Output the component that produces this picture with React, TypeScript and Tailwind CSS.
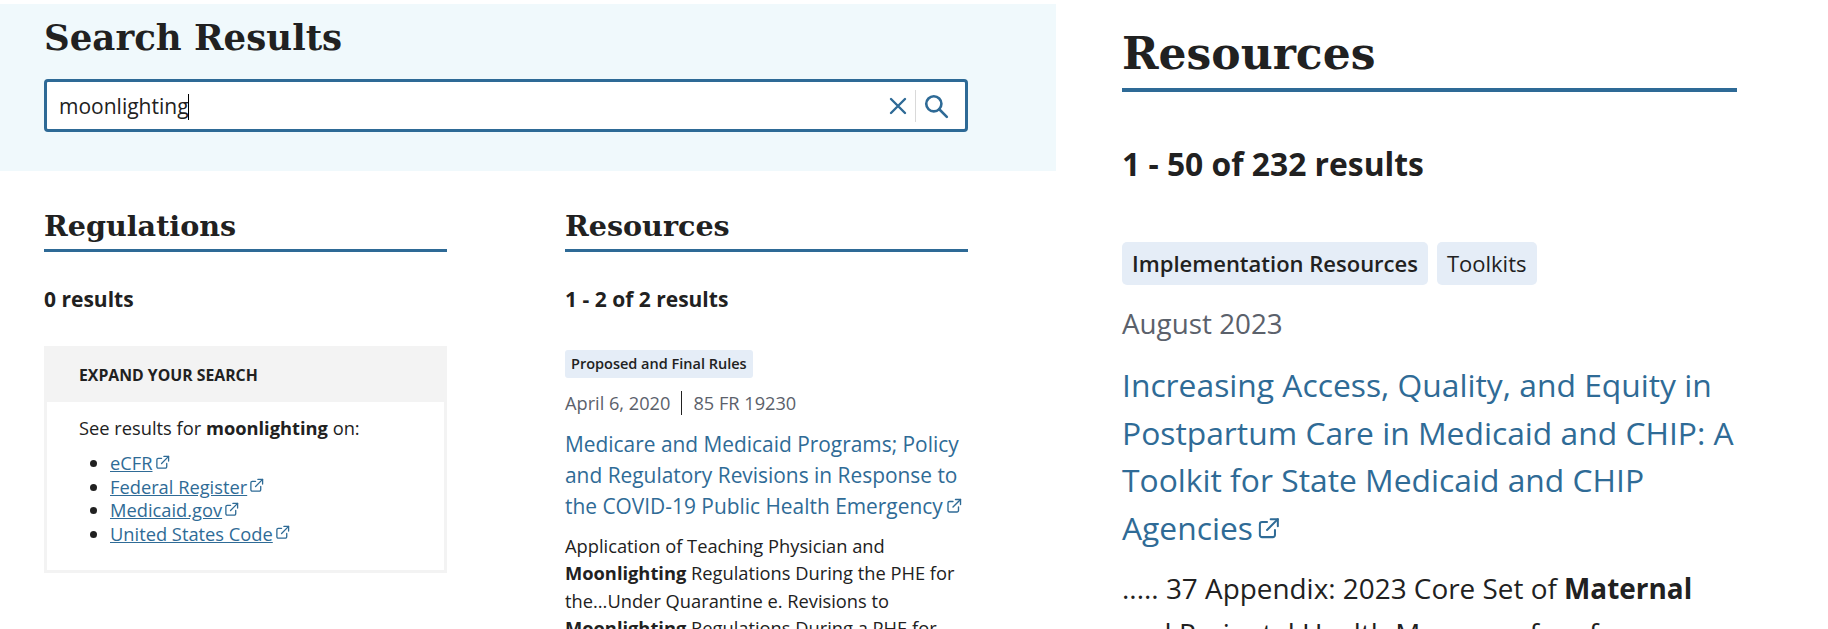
import type { ReactNode } from 'react';

const serif = "font-['DejaVu_Serif',serif] font-bold text-[#212121]";

function ExtIcon({ className }: { className: string }) {
  return (
    <svg viewBox="0 0 16 16" fill="none" stroke="currentColor" strokeWidth="1.4" strokeLinecap="round" strokeLinejoin="round" className={className}>
      <path d="M7 3.5H3.5A1.5 1.5 0 0 0 2 5v7.5A1.5 1.5 0 0 0 3.5 14H11a1.5 1.5 0 0 0 1.5-1.5V9" />
      <path d="M9.5 1.5h5v5" />
      <path d="M14.5 1.5 7 9" />
    </svg>
  );
}

function SectionHeading({ children }: { children: ReactNode }) {
  return (
    <h2 className={`${serif} border-b-[3px] border-[#2e6a96] pb-[5px] text-[28.6px] leading-[36px]`}>
      {children}
    </h2>
  );
}

function ExpandLink({ label }: { label: string }) {
  return (
    <li className="h-[23.5px] leading-[23.5px]">
      <a className="text-[#2f6b96] underline">{label}</a>
      <ExtIcon className="ml-[2px] inline-block h-[15px] w-[15px] -translate-y-[3px] text-[#2f6b96]" />
    </li>
  );
}

export default function App() {
  return (
    <div className="flex h-[629px] w-[1828px] overflow-hidden bg-white font-['Open_Sans',sans-serif] text-[#212121]">
      <div className="w-[1056px] shrink-0">
        <div className="mt-1 h-[167px] bg-[#f0f9fc] pl-11 pr-[88px] pt-[12px]">
          <h1 className={`${serif} text-[35.6px] leading-[44px]`}>Search Results</h1>
          <div className="mt-[19px] flex h-[53px] items-center rounded-[4px] border-[3px] border-[#2e6a96] bg-white pl-[12px] pr-[16px]">
            <span className="flex-1 text-[21px] text-[#212121]">
              moonlighting
              <span className="ml-[-1px] inline-block h-[26px] w-[1px] translate-y-[6px] bg-black" />
            </span>
            <svg viewBox="0 0 20 20" fill="none" stroke="#2e6a96" strokeWidth="2.4" strokeLinecap="round" className="h-[20px] w-[20px]">
              <path d="M3 3l14 14M17 3 3 17" />
            </svg>
            <div className="mx-[7px] h-[32px] w-[1px] bg-[#d9d9d9]" />
            <svg viewBox="0 0 24 24" fill="none" stroke="#2e6a96" strokeWidth="2.4" strokeLinecap="round" className="h-[26px] w-[26px]">
              <circle cx="10" cy="10" r="7" />
              <path d="m15 15 7 7" />
            </svg>
          </div>
        </div>

        <div className="flex gap-[118px] pl-11 pr-[88px] pt-[37px]">
          <section className="w-[403px] shrink-0">
            <SectionHeading>Regulations</SectionHeading>
            <p className="mt-[34px] text-[21px] font-bold leading-[26px]">0 results</p>
            <div className="mt-[34px] border-[3px] border-t-0 border-[#f3f3f3]">
              <div className="-mx-[3px] h-[56px] bg-[#f3f3f3] pl-[35px] text-[15.8px] font-bold leading-[58px]">
                EXPAND YOUR SEARCH
              </div>
              <div className="pb-[25px] pl-[32px] pr-2 pt-[13px] text-[18.3px]">
                <p className="leading-[26px]">
                  See results for <b>moonlighting</b> on:
                </p>
                <ul className="mt-[10px] list-disc pl-[31px]">
                  <ExpandLink label="eCFR" />
                  <ExpandLink label="Federal Register" />
                  <ExpandLink label="Medicaid.gov" />
                  <ExpandLink label="United States Code" />
                </ul>
              </div>
            </div>
          </section>

          <section className="w-[403px] shrink-0">
            <SectionHeading>Resources</SectionHeading>
            <p className="mt-[34px] text-[21px] font-bold leading-[26px]">1 - 2 of 2 results</p>
            <div className="mt-[38px] w-fit rounded-[3px] bg-[#e5edf7] px-[6px] text-[14.5px] font-semibold leading-[28px]">
              Proposed and Final Rules
            </div>
            <div className="mt-[13px] flex h-[24px] items-center text-[18.2px] leading-[24px] text-[#5b616b]">
              <span>April 6, 2020</span>
              <span className="mx-[11px] h-[24px] w-[1px] bg-[#212121]" />
              <span>85 FR 19230</span>
            </div>
            <a className="mt-[14px] block text-[20.9px] leading-[31px] text-[#2f6b96]">
              Medicare and Medicaid Programs; Policy and Regulatory Revisions in Response to the COVID-19 Public Health Emergency
              <ExtIcon className="ml-[3px] inline-block h-[16px] w-[16px] -translate-y-[2px]" />
            </a>
            <p className="mt-[10px] text-[18.3px] leading-[27.4px]">
              Application of Teaching Physician and <b>Moonlighting</b> Regulations During the PHE for the...Under Quarantine e. Revisions to <b>Moonlighting</b> Regulations During a PHE for
            </p>
          </section>
        </div>
      </div>

      <div className="ml-[66px] w-[615px] shrink-0">
        <h2 className={`${serif} border-b-[4px] border-[#2e6a96] pb-[9px] pt-[28px] text-[44px] leading-[51px]`}>
          Resources
        </h2>
        <p className="mt-[51px] text-[31.8px] font-bold leading-[42px]">1 - 50 of 232 results</p>
        <div className="mt-[57px] flex gap-[9px] text-[22px] leading-[43px]">
          <span className="rounded-[5px] bg-[#e5edf7] px-[10px] font-semibold">Implementation Resources</span>
          <span className="rounded-[5px] bg-[#e5edf7] px-[10px]">Toolkits</span>
        </div>
        <div className="mt-[20px] text-[27.8px] leading-[36px] text-[#5b616b]">August 2023</div>
        <a className="mt-[20px] block text-[31.8px] leading-[47.7px] text-[#2f6b96]">
          Increasing Access, Quality, and Equity in Postpartum Care in Medicaid and CHIP: A Toolkit for State Medicaid and CHIP Agencies
          <ExtIcon className="ml-[4px] inline-block h-[23px] w-[23px] -translate-y-[3px]" />
        </a>
        <p className="mt-[14px] text-[27.9px] leading-[45px]">
          ..... 37 Appendix: 2023 Core Set of <b>Maternal</b> and Perinatal Health Measures for...for
        </p>
      </div>
    </div>
  );
}
